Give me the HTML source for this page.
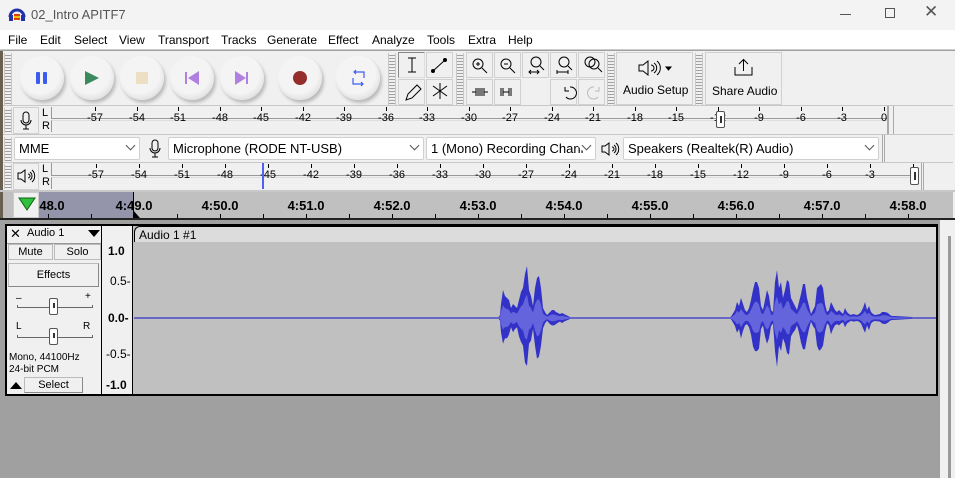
<!DOCTYPE html>
<html><head><meta charset="utf-8"><style>
*{box-sizing:border-box;margin:0;padding:0}
body{width:955px;height:478px;overflow:hidden;background:#a0a0a0;font-family:"Liberation Sans",sans-serif;font-size:12px;color:#000;position:relative}
.a{position:absolute}
.grip{position:absolute;width:8px;background:repeating-linear-gradient(#f0f0f0 0 2px,#a0a0a0 2px 3px);border-left:1px solid #c8c8c8;border-right:1px solid #c8c8c8}
.btn{position:absolute;width:44px;height:44px;border-radius:50%;background:radial-gradient(circle at 45% 40%,#f4f4f4 55%,#e6e6e6 70%,#c4c4c4 100%);box-shadow:2px 3px 3px #bbb}
.cell{position:absolute;width:27px;height:26px;background:#f0f0f0;border:1px solid #d0d0d0}
.lbl{position:absolute;font-size:11px;transform:translateX(-50%)}
.tick{position:absolute;width:1px;height:4px;background:#000}
.sel{position:absolute;height:23px;background:#fff;border:1px solid #d0d0d0;border-radius:2px;font-size:13px;padding:3px 4px;white-space:nowrap;overflow:hidden}
.chev{position:absolute;right:5px;top:4px;width:7px;height:7px;border-right:1px solid #555;border-bottom:1px solid #555;transform:rotate(45deg)}
.tl{position:absolute;top:198px;font-weight:bold;font-size:13px;transform:translateX(-50%)}
</style></head><body>
<!-- title bar -->
<div class="a" style="left:0;top:0;width:955px;height:30px;background:#f3f3f3"></div>
<svg class="a" style="left:8px;top:6px" width="18" height="16"><path d="M2 11 A7 7 0 0 1 16 11" fill="none" stroke="#2233aa" stroke-width="3"/><rect x="1" y="9" width="4" height="6" fill="#2233aa"/><rect x="13" y="9" width="4" height="6" fill="#2233aa"/><rect x="6" y="8" width="6" height="6" fill="#e04010"/><rect x="6" y="10" width="6" height="2" fill="#f0c000"/></svg>
<div class="a" style="left:31px;top:7px;font-size:13px;color:#555">02_Intro APITF7</div>
<div class="a" style="left:840px;top:14px;width:11px;height:1px;background:#555"></div>
<div class="a" style="left:885px;top:8px;width:10px;height:10px;border:1px solid #555"></div>
<div class="a" style="left:924px;top:2px;font-size:17px;color:#555">✕</div>
<!-- menu -->
<div class="a" style="left:0;top:30px;width:955px;height:20px;background:#fff;border-bottom:1px solid #ccc"></div>
<div class="a" style="left:8px;top:33px;font-size:12px;word-spacing:0">
<span style="position:absolute;left:0">File</span><span style="position:absolute;left:32px">Edit</span><span style="position:absolute;left:66px">Select</span><span style="position:absolute;left:111px">View</span><span style="position:absolute;left:150px">Transport</span><span style="position:absolute;left:213px">Tracks</span><span style="position:absolute;left:259px">Generate</span><span style="position:absolute;left:320px">Effect</span><span style="position:absolute;left:364px">Analyze</span><span style="position:absolute;left:419px">Tools</span><span style="position:absolute;left:460px">Extra</span><span style="position:absolute;left:500px">Help</span></div>
<!-- toolbar area bg -->
<div class="a" style="left:0;top:51px;width:955px;height:167px;background:#f0f0f0"></div>
<div class="a" style="left:0;top:51px;width:3px;height:167px;background:#6a6050"></div>
<div class="grip" style="left:4px;top:53px;height:52px"></div>
<div class="a" style="left:3px;top:105px;width:950px;height:1px;background:#c8c8c8"></div>
<div class="btn" style="left:20px;top:56px"></div><div class="btn" style="left:70px;top:56px"></div><div class="btn" style="left:120px;top:56px"></div><div class="btn" style="left:170px;top:56px"></div><div class="btn" style="left:220px;top:56px"></div><div class="btn" style="left:278px;top:56px"></div><div class="btn" style="left:336px;top:56px"></div>
<svg class="a" style="left:0;top:51px" width="390" height="55">
<rect x="36" y="21" width="4" height="12" fill="#3c5cf0" rx="1"/><rect x="43" y="21" width="4" height="12" fill="#3c5cf0" rx="1"/>
<path d="M85 20 L99 27 L85 34Z" fill="#3a8a5e"/>
<rect x="136" y="21" width="12" height="12" fill="#ecdfc4"/>
<rect x="185" y="21" width="2" height="12" fill="#b080e0"/><path d="M199 20 L188 27 L199 34Z" fill="#b080e0"/>
<rect x="246" y="21" width="2" height="12" fill="#b080e0"/><path d="M235 20 L246 27 L235 34Z" fill="#b080e0"/>
<circle cx="300" cy="27" r="7" fill="#962d2d"/>
<path d="M354 21h10v6M363 33h-10v-6M356 19l-2 2 2 2M361 31l2 2-2 2" fill="none" stroke="#3c5cf0" stroke-width="1.2"/>
</svg>
<div class="grip" style="left:388px;top:53px;height:52px"></div>
<div class="cell" style="left:398px;top:52px;border-color:#888 #ddd #ddd #888"></div><div class="cell" style="left:426px;top:52px"></div>
<div class="cell" style="left:398px;top:79px"></div><div class="cell" style="left:426px;top:79px"></div>
<svg class="a" style="left:398px;top:52px" width="56" height="53">
<path d="M10 6h8M14 6v14M10 20h8" stroke="#000" fill="none"/>
<path d="M35 19L47 8" stroke="#000"/><circle cx="35" cy="19" r="2"/><circle cx="47" cy="8" r="2"/>
<path d="M8 48l2-6 9-9 4 4-9 9z" fill="none" stroke="#000"/>
<path d="M42 31v16M35 34l14 10M49 34l-14 10" stroke="#000"/>
</svg>
<div class="grip" style="left:456px;top:53px;height:52px"></div>
<div class="cell" style="left:466px;top:52px"></div><div class="cell" style="left:494px;top:52px"></div><div class="cell" style="left:522px;top:52px"></div><div class="cell" style="left:550px;top:52px"></div><div class="cell" style="left:578px;top:52px"></div>
<div class="cell" style="left:466px;top:79px"></div><div class="cell" style="left:494px;top:79px"></div><div class="cell" style="left:550px;top:79px"></div><div class="cell" style="left:578px;top:79px"></div>
<svg class="a" style="left:466px;top:52px" width="140" height="53" fill="none" stroke="#000">
<circle cx="12" cy="12" r="5"/><path d="M16 16l5 5M10 12h4M12 10v4"/>
<circle cx="40" cy="12" r="5"/><path d="M44 16l5 5M38 12h4"/>
<circle cx="70" cy="10" r="5"/><path d="M74 14l4 4M63 20h10M65 18l-2 2 2 2M71 18l2 2-2 2"/>
<circle cx="98" cy="10" r="5"/><path d="M102 14l4 4M91 20h11M91 18v4M102 18v4"/>
<circle cx="124" cy="10" r="5"/><circle cx="128" cy="12" r="5"/><path d="M132 16l4 4"/>
<path d="M6 40h4M10 36v8M12 36v8M14 36v8M16 36v8M18 36v8M18 40h4"/>
<path d="M35 36v8M37 36v8M37 40h6M43 36v8M45 36v8"/>
<path d="M104 35a6 6 0 1 1-4 10M99 35v4h4"/>
<path d="M128 35a6 6 0 1 0 4 10M133 35v4h-4" stroke="#bbb"/>
</svg>
<div class="grip" style="left:607px;top:53px;height:52px"></div>
<div class="a" style="left:616px;top:52px;width:77px;height:53px;border:1px solid #d0d0d0"></div>
<svg class="a" style="left:637px;top:58px" width="40" height="20" fill="none" stroke="#000"><path d="M2 7h4l5-4v14l-5-4H2z"/><path d="M14 7a3 3 0 0 1 0 6M17 5a6 6 0 0 1 0 10M20 3a9 9 0 0 1 0 14"/><path d="M29 9h5l-2.5 3z" fill="#000"/></svg>
<div class="a" style="left:623px;top:83px;font-size:12px">Audio Setup</div>
<div class="grip" style="left:695px;top:53px;height:52px"></div>
<div class="a" style="left:705px;top:52px;width:77px;height:53px;border:1px solid #d0d0d0"></div>
<svg class="a" style="left:733px;top:58px" width="22" height="20" fill="none" stroke="#000"><path d="M2 9v8h17V9M10.5 13V2M6 6l4.5-4.5L15 6"/></svg>
<div class="a" style="left:712px;top:84px;font-size:12px">Share Audio</div>
<!-- rec meter -->
<div class="grip" style="left:4px;top:108px;height:25px"></div>
<div class="a" style="left:13px;top:107px;width:26px;height:27px;border:1px solid #d0d0d0"></div>
<svg class="a" style="left:19px;top:111px" width="14" height="20" fill="none" stroke="#000"><rect x="4" y="1" width="6" height="11" rx="3"/><path d="M2 9a5 5 0 0 0 10 0M7 14v4M4 18h6"/></svg>
<div class="a" style="left:42px;top:107px;font-size:11px;line-height:13px">L<br>R</div>
<div class="a" style="left:51px;top:107px;width:836px;height:12px;border-left:1px solid #999;border-bottom:1px solid #999"></div>
<div class="a" style="left:51px;top:120px;width:836px;height:12px;border-left:1px solid #999;border-top:1px solid #ddd"></div>
<div class="a" style="left:887px;top:106px;width:2px;height:28px;border-left:1px solid #aaa;border-right:1px solid #aaa"></div>
<div class="a" style="left:893px;top:106px;width:1px;height:28px;background:#aaa"></div>
<div id="m1"></div>
<div class="a" style="left:716px;top:111px;width:9px;height:17px;background:#fff;border:1px solid #555;border-radius:2px"><div style="margin:4px auto;width:2px;height:7px;background:#333"></div></div>
<div class="a" style="left:3px;top:134px;width:950px;height:1px;background:#c8c8c8"></div>
<!-- device row -->
<div class="grip" style="left:4px;top:137px;height:24px"></div>
<div class="sel" style="left:14px;top:137px;width:126px">MME<div class="chev"></div></div>
<svg class="a" style="left:148px;top:139px" width="14" height="20" fill="none" stroke="#000"><rect x="4" y="1" width="6" height="11" rx="3"/><path d="M2 9a5 5 0 0 0 10 0M7 14v4M4 18h6"/></svg>
<div class="sel" style="left:168px;top:137px;width:256px">Microphone (RODE NT-USB)<div class="chev"></div></div>
<div class="sel" style="left:426px;top:137px;width:170px">1 (Mono) Recording Chann<div class="chev" style="background:#fff;box-shadow:0 0 0 3px #fff"></div></div>
<svg class="a" style="left:600px;top:141px" width="20" height="16" fill="none" stroke="#000"><path d="M2 5h3l4-3v12l-4-3H2z"/><path d="M12 6a2 2 0 0 1 0 4M14 4a5 5 0 0 1 0 8M16 2a8 8 0 0 1 0 12"/></svg>
<div class="sel" style="left:623px;top:137px;width:256px">Speakers (Realtek(R) Audio)<div class="chev"></div></div>
<div class="a" style="left:882px;top:135px;width:3px;height:27px;border-left:1px solid #aaa;border-right:1px solid #aaa"></div>
<div class="a" style="left:3px;top:162px;width:950px;height:1px;background:#c8c8c8"></div>
<!-- play meter -->
<div class="grip" style="left:4px;top:164px;height:25px"></div>
<div class="a" style="left:13px;top:163px;width:26px;height:27px;border:1px solid #d0d0d0"></div>
<svg class="a" style="left:16px;top:168px" width="20" height="16" fill="none" stroke="#000"><path d="M2 5h3l4-3v12l-4-3H2z"/><path d="M12 6a2 2 0 0 1 0 4M14 4a5 5 0 0 1 0 8M16 2a8 8 0 0 1 0 12"/></svg>
<div class="a" style="left:42px;top:163px;font-size:11px;line-height:13px">L<br>R</div>
<div class="a" style="left:51px;top:163px;width:867px;height:13px;border-left:1px solid #999;border-bottom:1px solid #999"></div>
<div class="a" style="left:51px;top:177px;width:867px;height:12px;border-left:1px solid #999;border-top:1px solid #ddd"></div>
<div id="m2"></div>
<div class="a" style="left:262px;top:163px;width:2px;height:26px;background:#5060f0"></div>
<div class="a" style="left:910px;top:167px;width:9px;height:18px;background:#fff;border:1px solid #555;border-radius:2px"><div style="margin:4px auto;width:2px;height:8px;background:#333"></div></div>
<div class="a" style="left:921px;top:163px;width:3px;height:27px;border-left:1px solid #aaa;border-right:1px solid #aaa"></div>
<div class="a" style="left:0;top:190px;width:955px;height:2px;background:#c8c8c8"></div>
<!-- timeline -->
<div class="a" style="left:3px;top:192px;width:950px;height:26px;background:#c0c0c0"></div>
<div class="a" style="left:13px;top:192px;width:26px;height:26px;background:#f0f0f0;border:1px solid #ccc"></div>
<svg class="a" style="left:18px;top:197px" width="18" height="14"><path d="M1 1h16L9 13z" fill="#30c040" stroke="#106010"/></svg>
<div class="a" style="left:39px;top:192px;width:94px;height:26px;background:#9494aa"></div>
<div class="a" style="left:133px;top:192px;width:1px;height:26px;background:#000"></div>
<svg class="a" style="left:133px;top:210px" width="8" height="8"><path d="M0 0v8h7z" fill="#000"/></svg>
<div id="tl"></div>
<div class="a" style="left:0;top:218px;width:955px;height:2px;background:#222"></div>
<!-- scrollbar -->
<div class="a" style="left:940px;top:220px;width:15px;height:258px;background:#f0f0f0"></div>
<div class="a" style="left:948px;top:236px;width:3px;height:242px;background:#999"></div>
<!-- track -->
<div class="a" style="left:5px;top:224px;width:933px;height:172px;border:2px solid #000;background:#c0c0c0"></div>
<div class="a" style="left:7px;top:226px;width:94px;height:168px;background:#f0f0f0"></div>
<div class="a" style="left:8px;top:226px;width:15px;height:16px;font-size:13px;text-align:center">✕</div>
<div class="a" style="left:27px;top:227px;font-size:11px">Audio 1</div>
<svg class="a" style="left:88px;top:230px" width="12" height="8"><path d="M0 0h12L6 7z"/></svg>
<div class="a" style="left:7px;top:243px;width:94px;height:1px;background:#999"></div>
<div class="a" style="left:8px;top:244px;width:45px;height:16px;border:1px solid #bbb;font-size:11px;text-align:center;line-height:14px">Mute</div>
<div class="a" style="left:54px;top:244px;width:47px;height:16px;border:1px solid #bbb;font-size:11px;text-align:center;line-height:14px">Solo</div>
<div class="a" style="left:8px;top:263px;width:91px;height:24px;border:1px solid #bbb;border-right-color:#888;border-bottom-color:#888;font-size:11px;text-align:center;line-height:22px">Effects</div>
<div class="a" style="left:16px;top:293px;font-size:10px">–</div><div class="a" style="left:85px;top:291px;font-size:10px">+</div>
<div class="a" style="left:17px;top:305px;width:76px;height:3px;border-bottom:1px solid #666;border-left:1px solid #666;border-right:1px solid #666"></div>
<div class="a" style="left:49px;top:298px;width:9px;height:17px;background:#fff;border:1px solid #555;border-radius:2px"><div style="margin:4px auto;width:2px;height:5px;background:#333"></div></div>
<div class="a" style="left:16px;top:321px;font-size:10px">L</div><div class="a" style="left:83px;top:321px;font-size:10px">R</div>
<div class="a" style="left:17px;top:335px;width:76px;height:3px;border-bottom:1px solid #666;border-left:1px solid #666;border-right:1px solid #666"></div>
<div class="a" style="left:49px;top:328px;width:9px;height:17px;background:#fff;border:1px solid #555;border-radius:2px"><div style="margin:4px auto;width:2px;height:5px;background:#333"></div></div>
<div class="a" style="left:9px;top:352px;font-size:10px;line-height:12px">Mono, 44100Hz<br>24-bit PCM</div>
<svg class="a" style="left:10px;top:381px" width="12" height="8"><path d="M0 8h12L6 1z"/></svg>
<div class="a" style="left:24px;top:377px;width:59px;height:16px;border:1px solid #bbb;border-right-color:#888;border-bottom-color:#888;font-size:11px;text-align:center;line-height:14px">Select</div>
<div class="a" style="left:101px;top:226px;width:1px;height:168px;background:#000"></div>
<div class="a" style="left:102px;top:226px;width:31px;height:168px;background:#f0f0f0"></div>
<div class="a" style="left:132px;top:226px;width:1px;height:168px;background:#000"></div>
<div class="a" style="left:108px;top:244px;font-size:12px;font-weight:bold">1.0</div>
<div class="a" style="left:110px;top:274px;font-size:12px">0.5-</div>
<div class="a" style="left:108px;top:311px;font-size:12px;font-weight:bold">0.0-</div>
<div class="a" style="left:106px;top:347px;font-size:12px">-0.5-</div>
<div class="a" style="left:106px;top:378px;font-size:12px;font-weight:bold">-1.0</div>
<div class="a" style="left:134px;top:226px;width:802px;height:16px;background:#dcdcdc;border-top-left-radius:6px;border-left:1px solid #000;border-top:1px solid #000"></div>
<div class="a" style="left:139px;top:228px;font-size:12px">Audio 1 #1</div>
<svg class="a" style="left:0;top:0" width="955" height="478" id="wv"></svg>
<script>
function ticks(id,y,x0,step,ly){var h='';for(var i=0;i<=19;i++){var x=x0+i*step;var v=i==19?'0':'-'+(57-3*i);h+='<div class="tick" style="left:'+Math.round(x)+'px;top:'+y+'px"></div><div class="lbl" style="left:'+Math.round(x)+'px;top:'+ly+'px">'+v+'</div>';}document.getElementById(id).innerHTML=h;}
ticks('m1',107,95,41.5,112);ticks('m2',164,96,43.0,169);
var t='<div class="tl" style="left:52px">48.0</div><div class="tl" style="left:134px">4:49.0</div>';var lb=['4:50.0','4:51.0','4:52.0','4:53.0','4:54.0','4:55.0','4:56.0','4:57.0','4:58.0'];
for(var i=0;i<9;i++)t+='<div class="tl" style="left:'+(220+i*86)+'px">'+lb[i]+'</div>';
for(var x=48;x<940;x+=43)t+='<div class="tick" style="left:'+(x|0)+'px;top:214px"></div>';
document.getElementById('tl').innerHTML=t;
var e=[[498,0],[500,3],[501,14],[503,28],[505,22],[507,20],[509,18],[511,10],[513,14],[515,12],[517,10],[519,18],[521,26],[523,30],[525,44],[527,52],[529,28],[531,22],[533,12],[535,30],[537,40],[539,42],[541,30],[543,10],[545,6],[547,3],[550,6],[552,8],[554,8],[556,6],[558,5],[560,4],[562,5],[564,4],[566,3],[570,1],
[730,0],[732,3],[735,8],[737,16],[739,12],[741,20],[743,14],[745,8],[747,6],[749,10],[751,18],[753,28],[755,36],[757,36],[759,30],[761,12],[763,8],[765,18],[767,28],[769,22],[771,8],[773,6],[775,36],[777,48],[779,30],[781,36],[783,20],[785,28],[787,38],[789,36],[791,20],[793,16],[795,12],[797,8],[799,16],[801,24],[803,34],[805,34],[807,20],[809,12],[811,4],[813,8],[815,12],[817,30],[819,32],[821,34],[823,30],[825,14],[827,6],[829,8],[831,16],[833,12],[835,8],[837,6],[839,8],[841,6],[843,4],[845,10],[847,6],[849,4],[851,3],[853,4],[857,3],[859,4],[861,6],[863,10],[865,16],[867,8],[869,12],[871,6],[873,4],[875,3],[880,4],[882,6],[885,6],[888,5],[890,3],[892,2],[895,2],[912,1],[915,0]];
function poly(a,b,s,c){var seg=e.slice(a,b),p='';seg.forEach(function(q){p+=q[0]+','+(318-q[1]*s)+' ';});seg.slice().reverse().forEach(function(q,i){p+=q[0]+','+(318+q[1]*s*(i%3?0.92:1.02))+' ';});return '<polygon points="'+p+'" fill="'+c+'"/>';}
var n1=36;var s='<line x1="134" y1="318" x2="936" y2="318" stroke="#3232c8" stroke-width="1.2"/>';
s+=poly(0,n1,1,'#3232c8')+poly(n1,e.length,1,'#3232c8')+poly(0,n1,0.45,'#6464dc')+poly(n1,e.length,0.45,'#6464dc');
document.getElementById('wv').innerHTML=s;
</script>
</body></html>
